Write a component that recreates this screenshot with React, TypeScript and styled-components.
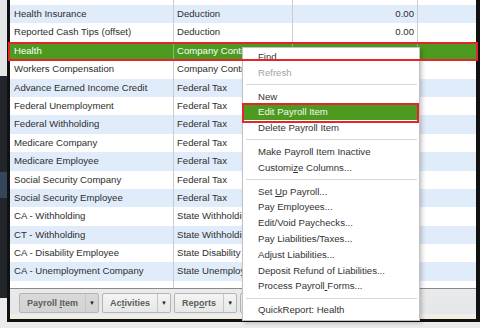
import styled, { createGlobalStyle } from 'styled-components';

const GlobalStyle = createGlobalStyle`
  html, body {
    margin: 0;
    padding: 0;
  }
  body {
    font-family: 'Liberation Sans', Arial, sans-serif;
    background: #e8eaec;
  }
`;

interface PayrollRow {
  name: string;
  type: string;
  amount?: string;
}

interface MenuEntry {
  label: string;
  key?: number;
  disabled?: boolean;
  active?: boolean;
  separatorBefore?: boolean;
}

const rows: PayrollRow[] = [
  { name: 'Health Insurance', type: 'Deduction', amount: '0.00' },
  { name: 'Reported Cash Tips (offset)', type: 'Deduction', amount: '0.00' },
  { name: 'Health', type: 'Company Contribution' },
  { name: 'Workers Compensation', type: 'Company Contribution' },
  { name: 'Advance Earned Income Credit', type: 'Federal Tax' },
  { name: 'Federal Unemployment', type: 'Federal Tax' },
  { name: 'Federal Withholding', type: 'Federal Tax' },
  { name: 'Medicare Company', type: 'Federal Tax' },
  { name: 'Medicare Employee', type: 'Federal Tax' },
  { name: 'Social Security Company', type: 'Federal Tax' },
  { name: 'Social Security Employee', type: 'Federal Tax' },
  { name: 'CA - Withholding', type: 'State Withholding' },
  { name: 'CT - Withholding', type: 'State Withholding' },
  { name: 'CA - Disability Employee', type: 'State Disability' },
  { name: 'CA - Unemployment Company', type: 'State Unemployment' },
];

const SELECTED = 2;

const menu: MenuEntry[] = [
  { label: 'Find...' },
  { label: 'Refresh', disabled: true },
  { label: 'New', separatorBefore: true },
  { label: 'Edit Payroll Item', active: true },
  { label: 'Delete Payroll Item' },
  { label: 'Make Payroll Item Inactive', separatorBefore: true },
  { label: 'Customize Columns...', key: 7 },
  { label: 'Set Up Payroll...', key: 4, separatorBefore: true },
  { label: 'Pay Employees...' },
  { label: 'Edit/Void Paychecks...' },
  { label: 'Pay Liabilities/Taxes...' },
  { label: 'Adjust Liabilities...' },
  { label: 'Deposit Refund of Liabilities...' },
  { label: 'Process Payroll Forms...', key: 15 },
  { label: 'QuickReport: Health', separatorBefore: true },
];

function withKey(label: string, key?: number) {
  if (key === undefined) return label;
  return (
    <>
      {label.slice(0, key)}
      <Key>{label[key]}</Key>
      {label.slice(key + 1)}
    </>
  );
}

export default function App(): JSX.Element {
  return (
    <>
      <GlobalStyle />
      <Page>
        <Window>
          <List>
            <Row $tone='white' $height={5}>
              <Cell />
              <Cell />
              <Cell />
              <Cell $last />
            </Row>
            {rows.map((row, index) => {
              const tone = index === SELECTED ? 'green' : index % 2 === 0 ? 'blue' : 'white';
              return (
                <Row key={row.name} $tone={tone} $height={18.4}>
                  <Cell $tone={tone}>{row.name}</Cell>
                  <Cell $tone={tone}>{row.type}</Cell>
                  <Cell $tone={tone} $right>{row.amount}</Cell>
                  <Cell $tone={tone} $last />
                  {index === SELECTED && <RowMark />}
                </Row>
              );
            })}
            <Filler>
              <Cell />
              <Cell />
              <Cell />
              <Cell $last />
            </Filler>
          </List>
          <Toolbar>
            <SplitButton $pressed>
              <ButtonLabel>
                Payroll <Key>I</Key>tem
              </ButtonLabel>
              <ButtonArrow>▼</ButtonArrow>
            </SplitButton>
            <SplitButton>
              <ButtonLabel>
                Ac<Key>t</Key>ivities
              </ButtonLabel>
              <ButtonArrow>▼</ButtonArrow>
            </SplitButton>
            <SplitButton>
              <ButtonLabel>
                Rep<Key>o</Key>rts
              </ButtonLabel>
              <ButtonArrow>▼</ButtonArrow>
            </SplitButton>
            <SplitButton>
              <ButtonLabel>Attach</ButtonLabel>
            </SplitButton>
          </Toolbar>
        </Window>

        <Menu>
          {menu.map((entry) => (
            <MenuGroup key={entry.label}>
              {entry.separatorBefore && <Separator />}
              <MenuItem $disabled={entry.disabled} $active={entry.active}>
                {withKey(entry.label, entry.key)}
                {entry.active && <ItemMark />}
              </MenuItem>
            </MenuGroup>
          ))}
        </Menu>
      </Page>
    </>
  );
}

type Tone = 'white' | 'blue' | 'green';

const Page = styled.div`
  position: relative;
  width: 480px;
  height: 328px;
  overflow: hidden;
  background:
    linear-gradient(
      to bottom,
      #e4e6e8 0,
      #e4e6e8 76px,
      #22262b 76px,
      #22262b 172px,
      #34465c 172px,
      #34465c 198px,
      #22262b 198px,
      #22262b 298px,
      #e9ebec 298px
    );
`;

const Window = styled.div`
  box-sizing: border-box;
  margin-left: 7px;
  width: 473px;
  height: 322px;
  border-left: 3px solid #111;
  border-right: 4px solid #111;
  border-bottom: 3px solid #111;
  background: #fff;
  display: flex;
  flex-direction: column;
`;

const List = styled.div`
  flex: 1;
  display: flex;
  flex-direction: column;
  min-height: 0;
`;

const rowGrid = `
  display: grid;
  grid-template-columns: 164px 119px 125px 1fr;
`;

const toneBg: Record<Tone, string> = {
  white: '#ffffff',
  blue: '#e1ecfb',
  green: '#4c9a1f',
};

const Row = styled.div<{ $tone: Tone; $height: number }>`
  ${rowGrid}
  position: relative;
  flex: 0 0 ${({ $height }) => $height}px;
  height: ${({ $height }) => $height}px;
  background: ${({ $tone }) => toneBg[$tone]};
`;

const Filler = styled.div`
  ${rowGrid}
  flex: 1;
  background: #fff;
`;

const Cell = styled.div<{ $tone?: Tone; $right?: boolean; $last?: boolean }>`
  box-sizing: border-box;
  padding: 0 3px 0 ${({ $right }) => ($right ? '3px' : '3px')};
  border-right: ${({ $last, $tone }) =>
    $last ? 'none' : `1px solid ${$tone === 'green' ? '#86bb67' : '#c9cdd2'}`};
  font-size: 9.6px;
  line-height: 18.4px;
  color: ${({ $tone }) => ($tone === 'green' ? '#ffffff' : '#2e2e2e')};
  text-align: ${({ $right }) => ($right ? 'right' : 'left')};
  white-space: nowrap;
  overflow: hidden;

  &:first-child {
    padding-left: 4px;
  }
`;

const RowMark = styled.div`
  position: absolute;
  left: -2px;
  right: -2px;
  top: 0;
  bottom: -1px;
  border: 2px solid #e3262b;
  z-index: 3;
  pointer-events: none;
`;

const Toolbar = styled.div`
  box-sizing: border-box;
  flex: 0 0 31px;
  border-top: 1px solid #8a8a8a;
  background: linear-gradient(to bottom, #e9eaeb 0, #e5e6e7 24px, #eef0ee 26px, #f3ecd9 100%);
  display: flex;
  align-items: flex-start;
  gap: 3px;
  padding: 4px 0 0 9px;
`;

const SplitButton = styled.div<{ $pressed?: boolean }>`
  box-sizing: border-box;
  display: flex;
  height: 20px;
  border: 1px solid #b5b5b5;
  border-radius: 2px;
  background: ${({ $pressed }) =>
    $pressed
      ? 'linear-gradient(to bottom, #d9d9d9, #d2d2d2)'
      : 'linear-gradient(to bottom, #f4f4f4, #e7e7e7)'};
`;

const ButtonLabel = styled.div`
  padding: 0 7px;
  font-size: 9px;
  font-weight: bold;
  line-height: 18px;
  color: #5c5c5c;
  white-space: nowrap;
`;

const ButtonArrow = styled.div`
  width: 12px;
  border-left: 1px solid #c6c6c6;
  display: flex;
  align-items: center;
  justify-content: center;
  font-size: 6px;
  color: #1c1c1c;
`;

const Key = styled.span`
  text-decoration: underline;
  text-underline-offset: 1px;
`;

const Menu = styled.div`
  position: absolute;
  left: 242px;
  top: 47px;
  width: 178px;
  box-sizing: border-box;
  padding: 1px 0 2px;
  border: 1px solid #c2c2c2;
  background: #fff;
  box-shadow: 2px 2px 4px rgba(0, 0, 0, 0.22);
  z-index: 2;
`;

const MenuGroup = styled.div`
  display: flex;
  flex-direction: column;
`;

const Separator = styled.div`
  height: 8px;
  display: flex;
  align-items: center;
  margin: 0 2px 0 3px;

  &::after {
    content: '';
    flex: 1;
    height: 1px;
    background: #d7d7d7;
  }
`;

const MenuItem = styled.div<{ $disabled?: boolean; $active?: boolean }>`
  position: relative;
  height: 15.8px;
  line-height: 15.8px;
  margin: 0 1px 0 1px;
  padding-left: 14px;
  font-size: 9.6px;
  white-space: nowrap;
  color: ${({ $disabled, $active }) => ($active ? '#f4f8ef' : $disabled ? '#a3a3a3' : '#333333')};
  background: ${({ $active }) => ($active ? '#4c9a1f' : 'transparent')};
`;

const ItemMark = styled.div`
  position: absolute;
  left: -2px;
  right: -1px;
  top: -1px;
  bottom: -3px;
  border: 2px solid #e3262b;
  pointer-events: none;
`;
